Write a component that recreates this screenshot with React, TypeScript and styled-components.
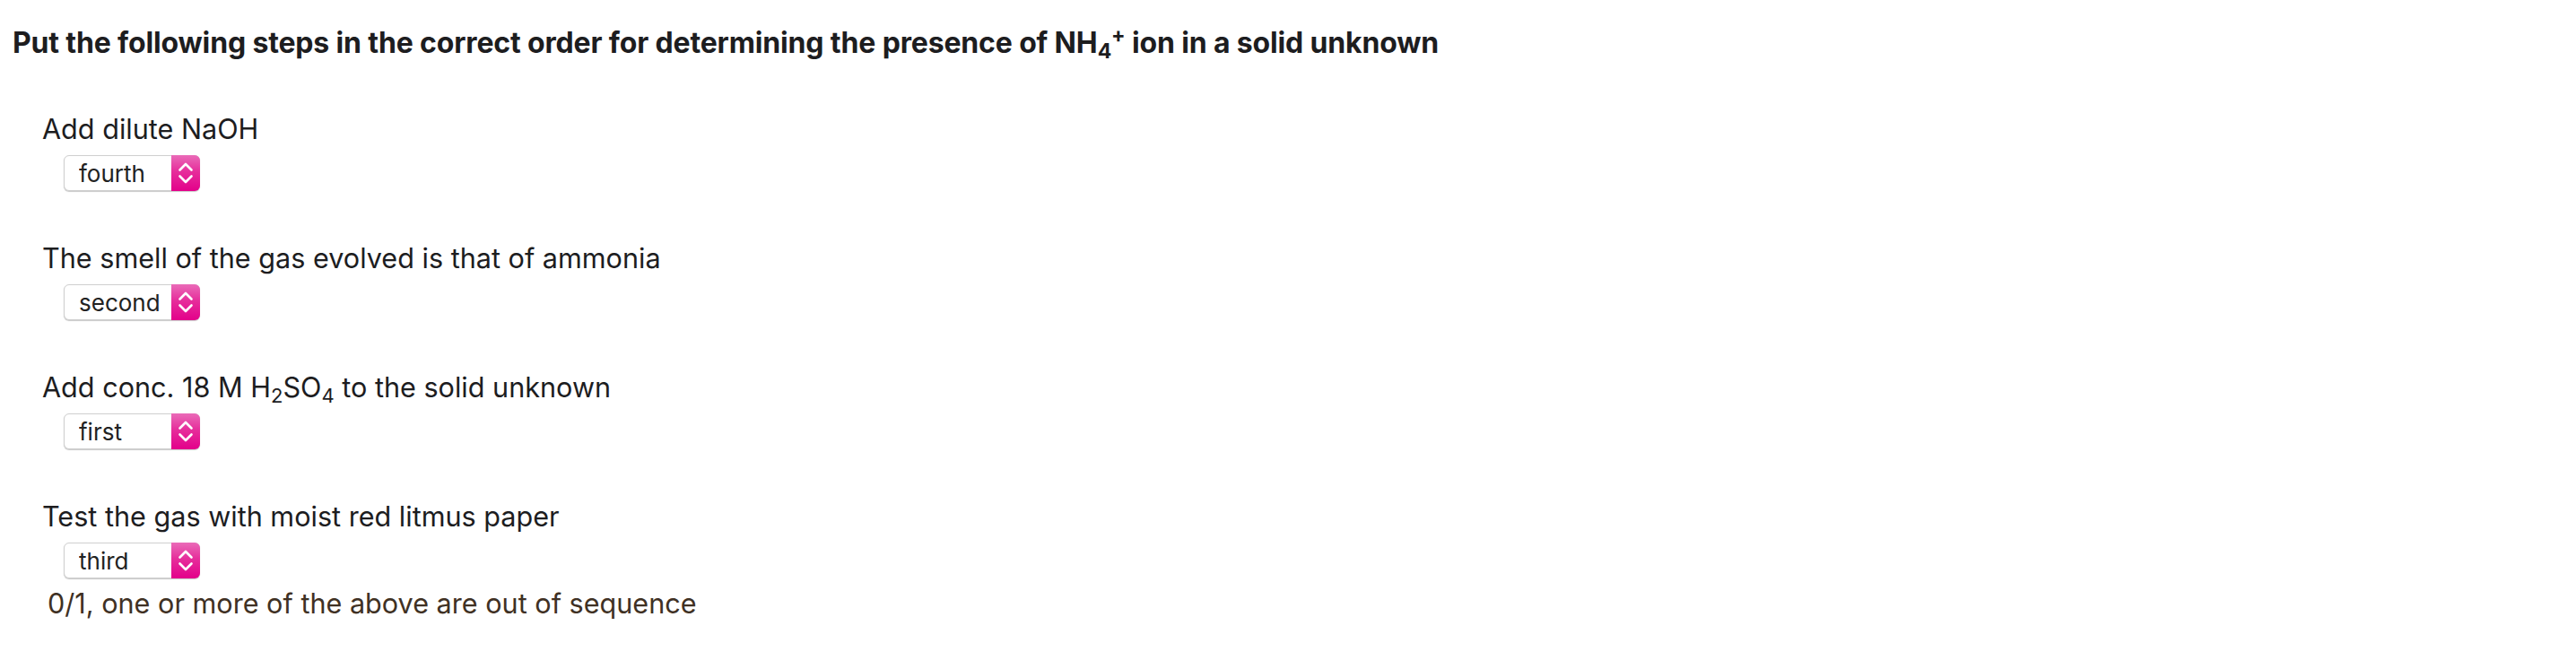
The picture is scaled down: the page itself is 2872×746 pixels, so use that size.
import React from 'react';
import styled, { createGlobalStyle } from 'styled-components';

const GlobalStyle = createGlobalStyle`
  html, body {
    margin: 0;
    padding: 0;
    background: #ffffff;
  }
  body {
    font-family: Inter, "Noto Sans", "Liberation Sans", sans-serif;
    color: #1d1d1f;
  }
`;

const Page = styled.div`
  padding: 29px 0 0 14px;
`;

const Title = styled.h1`
  margin: 0 0 59px;
  font-size: 32px;
  line-height: 38px;
  font-weight: 700;
  color: #1d1d1f;
  letter-spacing: -0.15px;
`;

const Steps = styled.div`
  display: flex;
  flex-direction: column;
  gap: 57px;
  padding-left: 33px;
`;

const Step = styled.div`
  display: flex;
  flex-direction: column;
  gap: 11px;
`;

const Label = styled.div`
  font-size: 30.6px;
  line-height: 36px;
  color: #1d1d1f;
`;

const Sub = styled.sub`
  font-size: 0.72em;
  line-height: 0;
  vertical-align: -0.28em;
`;

const Sup = styled.sup`
  font-size: 0.72em;
  line-height: 0;
  vertical-align: 0.5em;
`;

const SelectShell = styled.div`
  position: relative;
  width: 152px;
  height: 40px;
  margin-left: 24px;
`;

const NativeSelect = styled.select`
  appearance: none;
  -webkit-appearance: none;
  width: 100%;
  height: 100%;
  box-sizing: border-box;
  margin: 0;
  padding: 0 36px 0 16px;
  border: 1px solid #cfcfcf;
  border-radius: 6px;
  background: #ffffff;
  box-shadow: 0 1px 1px rgba(0, 0, 0, 0.22);
  font-family: Inter, "Noto Sans", "Liberation Sans", sans-serif;
  font-size: 26px;
  color: #222222;
  outline: none;
`;

const Stepper = styled.span`
  position: absolute;
  top: 0;
  right: 0;
  width: 32px;
  height: 40px;
  border-radius: 0 6px 6px 0;
  background: linear-gradient(180deg, #ea6bb8 0%, #e62e9b 45%, #e3008a 100%);
  display: flex;
  pointer-events: none;
`;

const Feedback = styled.div`
  margin: 10px 0 0 39px;
  font-size: 30.6px;
  line-height: 36px;
  color: #3f3124;
`;

const Chevrons = () => (
  <svg width="32" height="40" viewBox="0 0 32 40" fill="none">
    <path d="M9.5 16.5 L16 10 L22.5 16.5" stroke="#fff" strokeWidth="2.6" strokeLinecap="round" strokeLinejoin="round" />
    <path d="M9.5 23.5 L16 30 L22.5 23.5" stroke="#fff" strokeWidth="2.6" strokeLinecap="round" strokeLinejoin="round" />
  </svg>
);

const options = ['first', 'second', 'third', 'fourth'];

interface StepSelectProps {
  value: string;
}

const StepSelect: React.FC<StepSelectProps> = ({ value }) => (
  <SelectShell>
    <NativeSelect defaultValue={value}>
      {options.map((o) => (
        <option key={o} value={o}>
          {o}
        </option>
      ))}
    </NativeSelect>
    <Stepper>
      <Chevrons />
    </Stepper>
  </SelectShell>
);

const steps: { label: React.ReactNode; value: string }[] = [
  { label: 'Add dilute NaOH', value: 'fourth' },
  { label: 'The smell of the gas evolved is that of ammonia', value: 'second' },
  {
    label: (
      <>
        Add conc. 18 M H<Sub>2</Sub>SO<Sub>4</Sub> to the solid unknown
      </>
    ),
    value: 'first',
  },
  { label: 'Test the gas with moist red litmus paper', value: 'third' },
];

const App: React.FC = () => (
  <>
    <GlobalStyle />
    <Page>
      <Title>
        Put the following steps in the correct order for determining the presence of NH<Sub>4</Sub>
        <Sup>+</Sup> ion in a solid unknown
      </Title>
      <Steps>
        {steps.map((s, i) => (
          <Step key={i}>
            <Label>{s.label}</Label>
            <StepSelect value={s.value} />
          </Step>
        ))}
      </Steps>
      <Feedback>0/1, one or more of the above are out of sequence</Feedback>
    </Page>
  </>
);

export default App;
